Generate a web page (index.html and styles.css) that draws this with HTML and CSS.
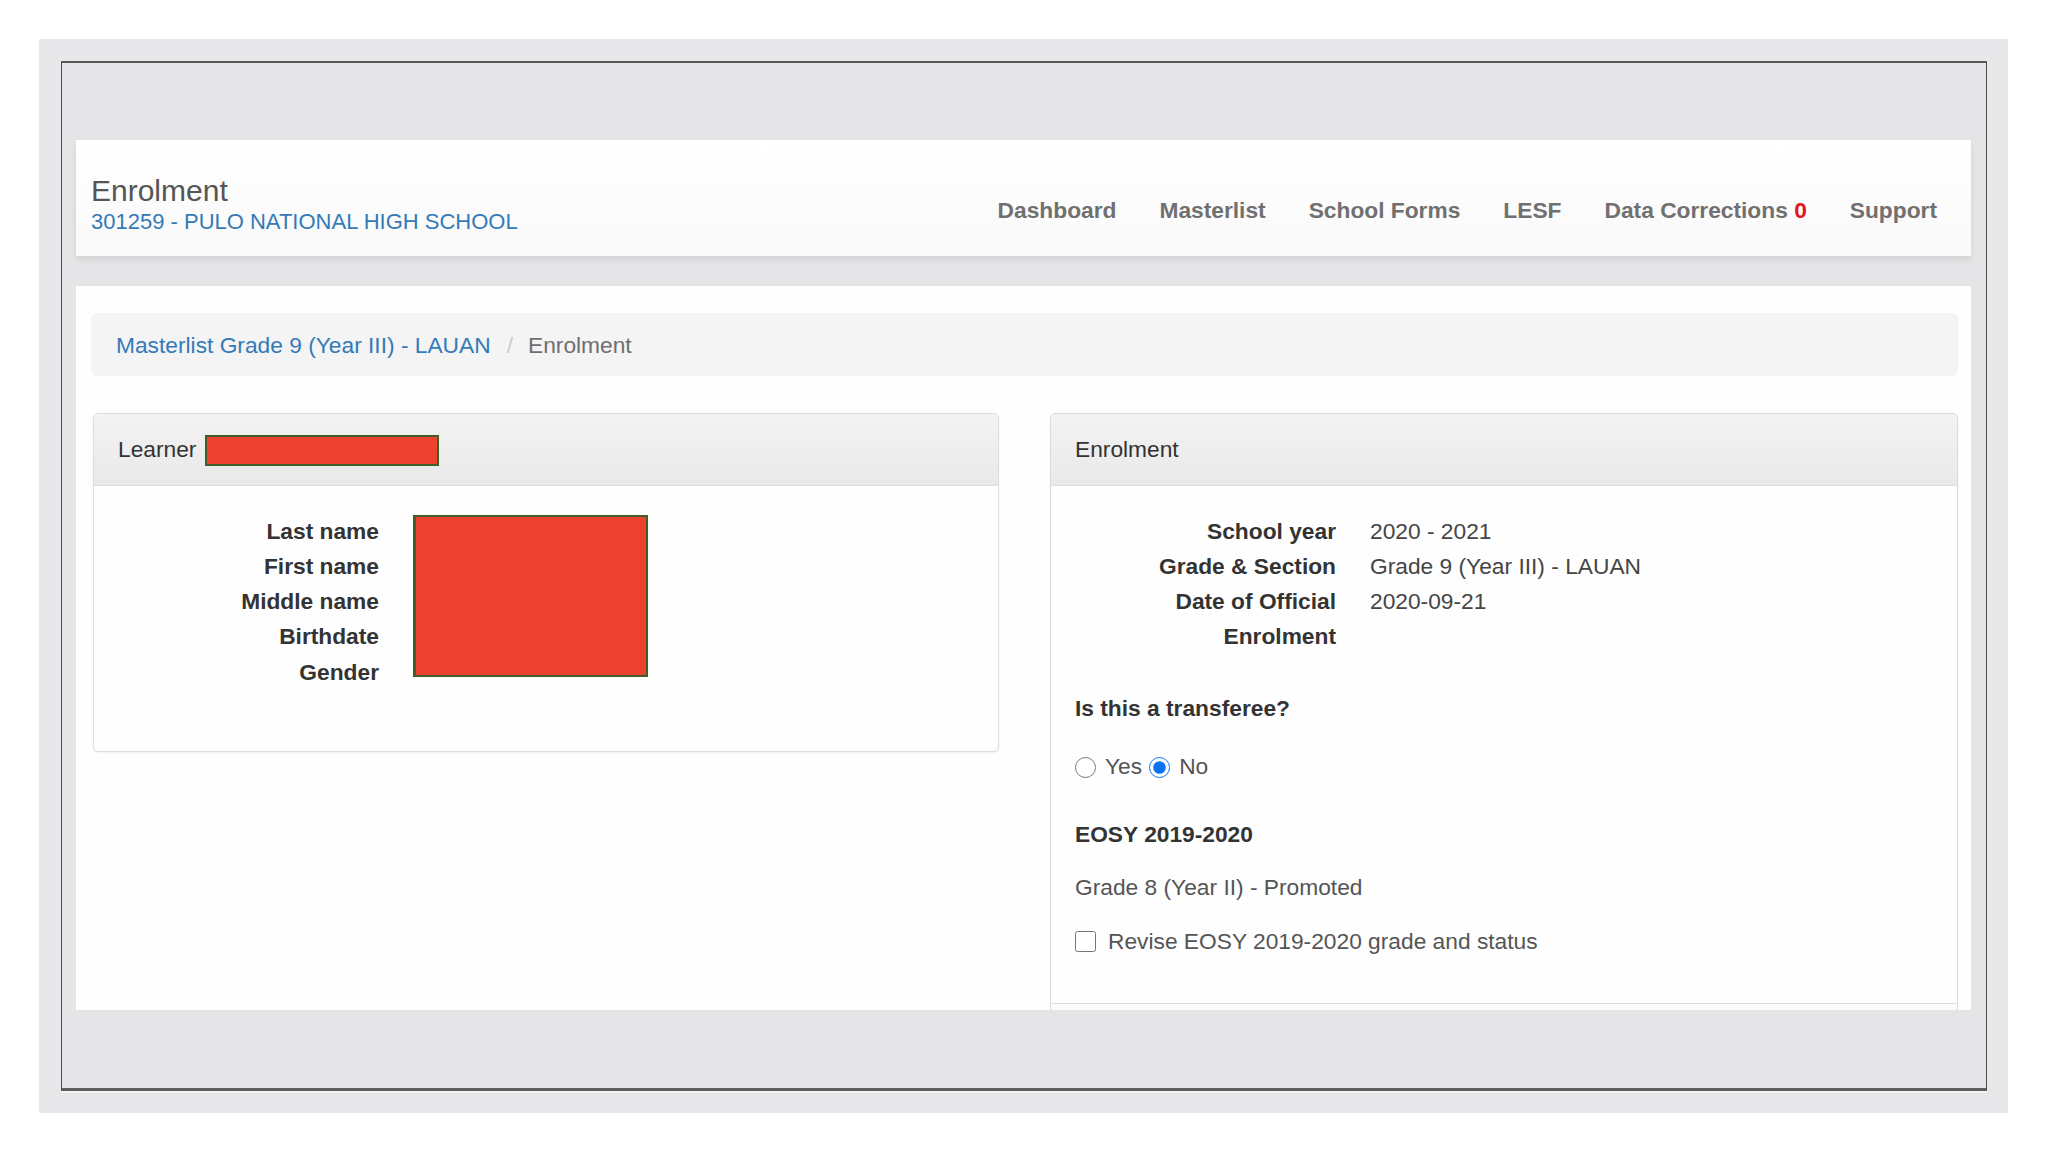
FILE: index.html
```html
<!DOCTYPE html>
<html lang="en">
<head>
<meta charset="utf-8">
<title>Enrolment</title>
<link rel="stylesheet" href="styles.css">
</head>
<body>
<div class="screen">
  <div class="frame">
    <header class="navbar">
      <div class="brand">
        <div class="brand-title">Enrolment</div>
        <div class="brand-sub">301259 - PULO NATIONAL HIGH SCHOOL</div>
      </div>
      <nav class="nav">
        <a class="nav-link">Dashboard</a>
        <a class="nav-link">Masterlist</a>
        <a class="nav-link">School Forms</a>
        <a class="nav-link">LESF</a>
        <a class="nav-link">Data Corrections <span class="count">0</span></a>
        <a class="nav-link">Support</a>
      </nav>
    </header>
    <main class="content">
      <div class="breadcrumb">
        <a class="crumb-link">Masterlist Grade 9 (Year III) - LAUAN</a>
        <span class="crumb-sep">/</span>
        <span class="crumb-active">Enrolment</span>
      </div>
      <div class="panels">
        <section class="panel panel-learner">
          <div class="panel-heading">
            <span>Learner</span>
            <span class="redact redact-name"></span>
          </div>
          <div class="panel-body learner-body">
            <dl class="info">
              <dt>Last name</dt>
              <dt>First name</dt>
              <dt>Middle name</dt>
              <dt>Birthdate</dt>
              <dt>Gender</dt>
              <dd class="redact redact-block"></dd>
            </dl>
          </div>
        </section>
        <section class="panel panel-enrol">
          <div class="panel-heading">
            <span>Enrolment</span>
          </div>
          <div class="panel-body enrol-body">
            <dl class="info info-pairs">
              <dt>School year</dt>
              <dd>2020 - 2021</dd>
              <dt>Grade &amp; Section</dt>
              <dd>Grade 9 (Year III) - LAUAN</dd>
              <dt>Date of Official Enrolment</dt>
              <dd>2020-09-21</dd>
            </dl>
            <div class="question">Is this a transferee?</div>
            <div class="radios">
              <label class="choice"><input type="radio" name="transferee"><span>Yes</span></label>
              <label class="choice"><input type="radio" name="transferee" checked><span>No</span></label>
            </div>
            <div class="section-title">EOSY 2019-2020</div>
            <div class="eosy">Grade 8 (Year II) - Promoted</div>
            <label class="check"><input type="checkbox"><span>Revise EOSY 2019-2020 grade and status</span></label>
          </div>
          <div class="panel-footer"></div>
        </section>
      </div>
    </main>
  </div>
</div>
</body>
</html>
```
FILE: styles.css
```css
* {
  box-sizing: border-box;
}

html, body {
  margin: 0;
  padding: 0;
  background: #ffffff;
}

body {
  font-family: "Liberation Sans", Arial, sans-serif;
  font-size: 22.75px;
  line-height: 35.3px;
  color: #333333;
}

.screen {
  margin: 39px 0 0 39px;
  width: 1969px;
  height: 1074px;
  padding: 22px;
  background: #e8e8ea;
}

.frame {
  width: 1926px;
  height: 1030px;
  border: 1px solid #4a4a4a;
  border-top: 2px solid #5a5a5a;
  border-bottom: 3px solid #5e5e5e;
  background: #e5e5e7;
  padding: 77px 15px 0 14px;
  box-shadow: 0 2px 0 #f4f4f4;
}

/* ---------- navbar ---------- */
.navbar {
  height: 116px;
  background: linear-gradient(#ffffff, #f9f9fa);
  padding: 34px 34px 0 15px;
  display: flex;
  justify-content: space-between;
  align-items: flex-start;
  box-shadow: 0 4px 6px rgba(0, 0, 0, 0.08);
  position: relative;
  z-index: 1;
}

.brand-title {
  font-size: 30px;
  line-height: 34px;
  color: #555555;
}

.brand-sub {
  font-size: 22px;
  line-height: 27px;
  color: #337ab7;
}

.nav {
  display: flex;
  gap: 43px;
  margin-top: 20px;
  line-height: 32px;
}

.nav-link {
  font-weight: bold;
  color: #707070;
  white-space: nowrap;
}

.count {
  color: #e0151f;
}

/* ---------- content ---------- */
.content {
  margin-top: 30px;
  height: 724px;
  overflow: hidden;
  background: #fefefe;
  padding: 27px 13px 0 15px;
}

.breadcrumb {
  height: 63px;
  border-radius: 6px;
  background: #f4f4f5;
  padding: 15px 25px 13px;
  line-height: 35px;
  display: flex;
  white-space: nowrap;
}

.crumb-link {
  color: #337ab7;
}

.crumb-sep {
  color: #cccccc;
  margin: 0 15px 0 16px;
}

.crumb-active {
  color: #6f6f6f;
}

.panels {
  margin-top: 37px;
  padding-left: 2px;
  display: grid;
  grid-template-columns: 906px 908px;
  column-gap: 51px;
  align-items: start;
}

.panel {
  border: 1px solid #dcdcde;
  border-radius: 5px;
  background: #fefefe;
  box-shadow: 0 1px 2px rgba(0, 0, 0, 0.06);
  overflow: hidden;
}

.panel-heading {
  height: 72px;
  border-bottom: 1px solid #dedee0;
  background: linear-gradient(#f3f3f4, #e9e9ea);
  padding: 0 24px;
  display: flex;
  align-items: center;
  gap: 9px;
  color: #333333;
}

.panel-body {
  padding: 27.5px 24px 0;
}

.learner-body {
  padding-bottom: 61px;
}

.enrol-body {
  padding-bottom: 44px;
}

.info {
  margin: 0;
  display: grid;
  grid-template-columns: 261px 1fr;
  column-gap: 34px;
}

.info dt {
  grid-column: 1;
  text-align: right;
  font-weight: bold;
  color: #333333;
}

.info dd {
  grid-column: 2;
  margin: 0;
  color: #454545;
}

.redact {
  background: #ef4130;
  border: 2px solid #3f5f28;
}

.redact-name {
  display: inline-block;
  width: 234px;
  height: 31px;
  margin-top: 2px;
}

.redact-block {
  grid-row: 1 / span 5;
  align-self: start;
  width: 235px;
  height: 162px;
  margin-top: 1.5px !important;
  border-left-width: 3px;
}

.question {
  margin-top: 36px;
  font-weight: bold;
}

.radios {
  margin-top: 23.5px;
  display: flex;
  align-items: center;
  gap: 7px;
  color: #555555;
}

.choice {
  display: flex;
  align-items: center;
  gap: 9px;
}

.choice input {
  width: 21px;
  height: 21px;
  margin: 0;
  accent-color: #0a74f0;
}

.section-title {
  margin-top: 32.5px;
  font-weight: bold;
}

.eosy {
  margin-top: 17.5px;
  color: #555555;
}

.check {
  margin-top: 18.7px;
  display: flex;
  align-items: center;
  gap: 12px;
  color: #555555;
}

.check input {
  width: 21px;
  height: 21px;
  margin: 0;
}

.panel-footer {
  height: 40px;
  border-top: 1px solid #dedee0;
  background: #fbfbfc;
}
```
